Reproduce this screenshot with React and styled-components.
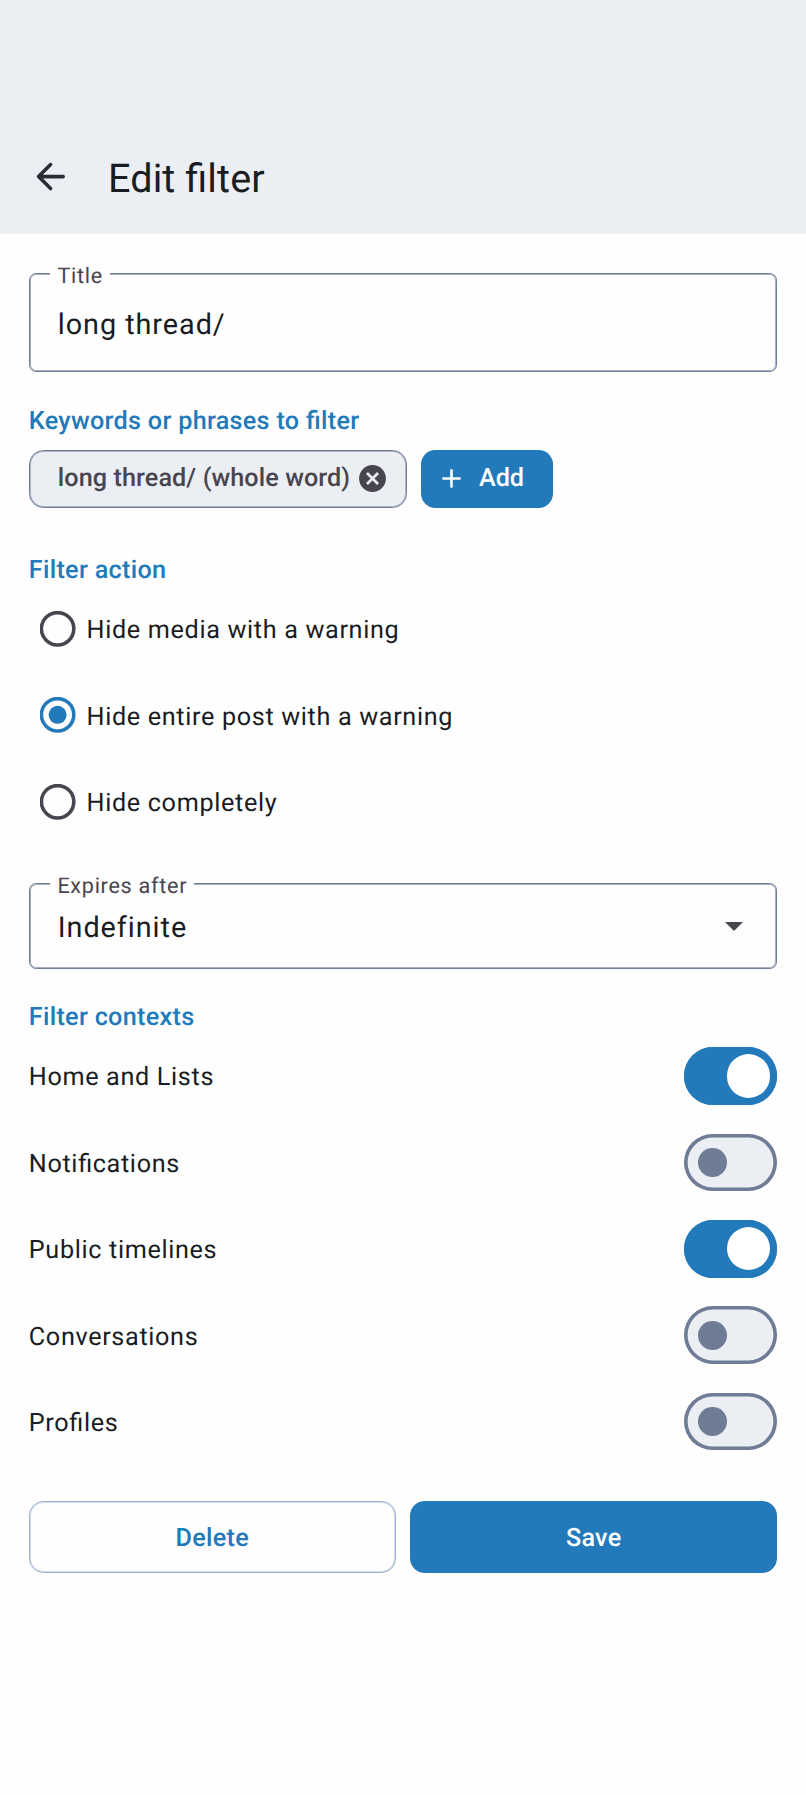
import React, { useState } from 'react';
import styled, { createGlobalStyle } from 'styled-components';

const actions = [
  {id: 'media', label: "Hide media with a warning"},
  {id: 'warn', label: "Hide entire post with a warning"},
  {id: 'hide', label: "Hide completely"},
];

const contextData = [
  {id: 'home', label: "Home and Lists", on: true},
  {id: 'notifications', label: "Notifications", on: false},
  {id: 'public', label: "Public timelines", on: true},
  {id: 'thread', label: "Conversations", on: false},
  {id: 'account', label: "Profiles", on: false},
];

const RadioIcon = ({ checked }) => (
  <svg width="37" height="36" viewBox="0 0 37 36">
    <circle cx="17.6" cy="17.8" r="16.2" fill="none" stroke={checked ? '#227abb' : '#49454f'} strokeWidth="3.6" />
    {checked && <circle cx="17.6" cy="17.8" r="9" fill="#227abb" />}
  </svg>
);

export default function App() {
  const [action, setAction] = useState('warn');
  const [contexts, setContexts] = useState(contextData);

  const handleToggle = (id) => {
    setContexts(contexts.map((c) => c.id === id ? { ...c, on: !c.on } : c));
  }

  return (
    <>
      <GlobalStyle />
      <Header>
        <BackButton aria-label="Back">
          <svg width="30" height="30" viewBox="0 0 30 30" fill="none" stroke="#282c37" strokeWidth="3.6" strokeLinecap="round" strokeLinejoin="round">
            <path d="M27.2 14.6H2.6M14.6 2.6L2.6 14.6L14.6 26.6" />
          </svg>
        </BackButton>
        <PageTitle>Edit filter</PageTitle>
      </Header>
      <Main>
        <Field $height="99px">
          <FieldLabel>Title</FieldLabel>
          <FieldValue>long thread/</FieldValue>
        </Field>

        <SectionTitle $top="37px">Keywords or phrases to filter</SectionTitle>
        <Chips>
          <Chip>
            long thread/ (whole word)
            <svg width="27" height="27" viewBox="0 0 27 27">
              <circle cx="13.5" cy="13.5" r="13.4" fill="#49454f" />
              <path d="M8 8L19 19M19 8L8 19" stroke="#ebeef3" strokeWidth="2.7" />
            </svg>
          </Chip>
          <AddChip>
            <svg width="19" height="19" viewBox="0 0 19 19" stroke="#fff" strokeWidth="2.6" strokeLinecap="round">
              <path d="M9.5 1.4V17.6M1.4 9.5H17.6" />
            </svg>
            Add
          </AddChip>
        </Chips>

        <SectionTitle $top="50px">Filter action</SectionTitle>
        <RadioList>
          {actions.map((a) => (
            <RadioRow key={a.id} onClick={() => setAction(a.id)}>
              <RadioIcon checked={a.id === action} />
              <RowText>{a.label}</RowText>
            </RadioRow>
          ))}
        </RadioList>

        <Field $height="86px" $top="38.4px">
          <FieldLabel>Expires after</FieldLabel>
          <FieldValue>Indefinite</FieldValue>
          <DropdownArrow width="18" height="9" viewBox="0 0 18 9">
            <path d="M0 0H18L9 9Z" fill="#49454f" />
          </DropdownArrow>
        </Field>

        <SectionTitle $top="35.8px">Filter contexts</SectionTitle>
        <SwitchList>
          {contexts.map((c) => (
            <SwitchRow key={c.id} onClick={() => handleToggle(c.id)}>
              <RowText>{c.label}</RowText>
              <Track $on={c.on}><Thumb $on={c.on} /></Track>
            </SwitchRow>
          ))}
        </SwitchList>

        <Buttons>
          <Button>Delete</Button>
          <Button $filled>Save</Button>
        </Buttons>
      </Main>
    </>
  )
}


const GlobalStyle = createGlobalStyle`
* {
  box-sizing: border-box;
}
body {
  margin: 0;
  min-height: 100vh;
  background-color: #fefefe;
  color: #191c22;
  font-family: Roboto, sans-serif;
  font-size: 25.2px;
  font-feature-settings: "liga" 1;
  text-rendering: geometricPrecision;
}
svg {
  display: block;
  flex-shrink: 0;
}
button {
  font: inherit;
  font-feature-settings: inherit;
  text-rendering: inherit;
  border: none;
  padding: 0;
}
`;

const Header = styled.header`
display: flex;
align-items: center;
height: 234px;
padding: 120px 36px 0;
gap: 42px;
background-color: #ebeef3;
`;

const BackButton = styled.button`
background: none;
`;

const PageTitle = styled.h1`
margin: 4px 0 0;
font-size: 39.6px;
font-weight: 400;
line-height: 50px;
letter-spacing: 0.1px;
`;

const Main = styled.main`
display: flex;
flex-direction: column;
padding: 39px 28.8px 0;
`;

const Field = styled.div`
position: relative;
display: flex;
align-items: center;
justify-content: space-between;
height: ${props => props.$height};
margin-top: ${props => props.$top || '0'};
padding: 4px 33px 0 28px;
border: 1px solid #6f7c96;
border-radius: 7.2px;
box-shadow: inset 0 0 0 1px #a9b1c1;
`;

/* sits on top of the outline and cuts the notch */
const FieldLabel = styled.span`
position: absolute;
top: -11px;
left: 20.4px;
padding: 0 7.2px;
background-color: #fefefe;
color: #49454f;
font-size: 21.6px;
line-height: 28px;
letter-spacing: 0.72px;
`;

const FieldValue = styled.span`
font-size: 28.8px;
line-height: 36px;
letter-spacing: 0.95px;
font-feature-settings: "liga" 0;
`;

const DropdownArrow = styled.svg`
margin-bottom: 3px;
`;

const SectionTitle = styled.h2`
margin: ${props => props.$top} 0 0;
color: #227abb;
font-size: 25.2px;
font-weight: 500;
line-height: 26px;
letter-spacing: 0.3px;
`;

const Chips = styled.div`
display: flex;
gap: 14.4px;
margin-top: 15px;
`;

const Chip = styled.div`
display: flex;
align-items: center;
gap: 8.4px;
height: 57.6px;
padding: 0 20px 0 28px;
border: 1px solid #6f7c96;
border-radius: 14.4px;
box-shadow: inset 0 0 0 1px #adb5c5;
background-color: #ebeef3;
color: #49454f;
font-weight: 500;
letter-spacing: 0.09px;
`;

const AddChip = styled.button`
display: flex;
align-items: center;
gap: 18px;
height: 57.6px;
padding: 0 28.8px 0 21px;
border-radius: 14.4px;
background-color: #227abb;
color: #fff;
font-weight: 500;
letter-spacing: -0.05px;
`;

const RadioList = styled.div`
display: flex;
flex-direction: column;
margin-top: 2px;
`;

const RadioRow = styled.label`
display: flex;
align-items: center;
gap: 9.6px;
height: 86.4px;
padding-left: 11.2px;
`;

const RowText = styled.span`
padding-top: 4px;
letter-spacing: 0.66px;
`;

const SwitchList = styled.div`
display: flex;
flex-direction: column;
margin-top: 1.8px;
`;

const SwitchRow = styled.label`
display: flex;
align-items: center;
justify-content: space-between;
height: 86.4px;
`;

const Track = styled.span`
display: flex;
align-items: center;
justify-content: ${props => props.$on ? 'flex-end' : 'flex-start'};
width: 93.6px;
height: 57.6px;
padding: 0 ${props => props.$on ? '7.2px' : '14.4px'};
border-radius: 28.8px;
background-color: ${props => props.$on ? '#227abb' : '#ebeef3'};
box-shadow: inset 0 0 0 3.6px ${props => props.$on ? '#227abb' : '#6f7c96'};
`;

const Thumb = styled.span`
width: ${props => props.$on ? '43.2px' : '28.8px'};
height: ${props => props.$on ? '43.2px' : '28.8px'};
border-radius: 50%;
background-color: ${props => props.$on ? '#fff' : '#6f7c96'};
`;

const Buttons = styled.div`
display: grid;
grid-template-columns: 1fr 1fr;
gap: 14.4px;
margin-top: 36px;
`;

const Button = styled.button`
height: 72px;
padding-top: 3px;
border-radius: 14.4px;
background-color: ${props => props.$filled ? '#227abb' : 'transparent'};
color: ${props => props.$filled ? '#fff' : '#227abb'};
border: 1px solid ${props => props.$filled ? '#227abb' : '#9bb0cd'};
box-shadow: ${props => props.$filled ? 'none' : 'inset 0 0 0 1px #d3dce9'};
font-weight: 500;
letter-spacing: 0.28px;
`;
